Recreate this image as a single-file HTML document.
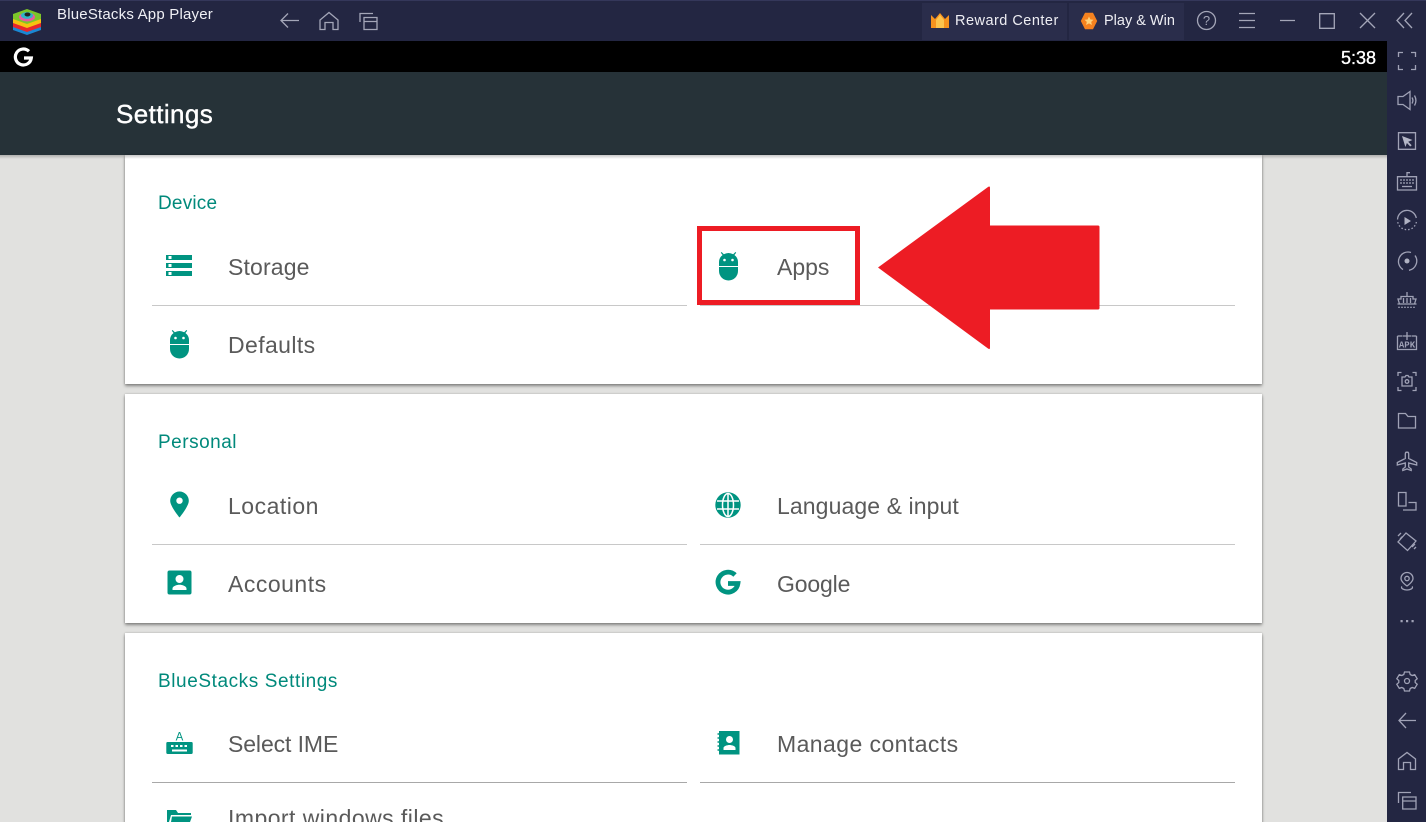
<!DOCTYPE html>
<html lang="en"><head><meta charset="utf-8"><title>BlueStacks App Player</title>
<style>
html,body{margin:0;padding:0;width:1426px;height:822px;overflow:hidden;background:#e1e1df;font-family:"Liberation Sans",sans-serif}
div,span,svg{position:absolute}
#app{left:0;top:0;width:1426px;height:822px;overflow:hidden;background:#e1e1df}
.t{white-space:nowrap;color:#5a5a5a;font-size:23px;line-height:28px}
.h{white-space:nowrap;color:#00897b;font-size:19px;line-height:22px}
.card{left:125px;width:1137px;background:#fff;box-shadow:0 2px 3px rgba(0,0,0,.4),0 0 2px rgba(0,0,0,.2)}
.l{height:1px;background:#c8c8c8;width:535px}
.w{white-space:nowrap;color:#fff}
.s{fill:none;stroke:#a0a2b6;stroke-width:1.3}
.tl{fill:none;stroke:#a4a6b8;stroke-width:1.3}
.b{background:#2a2d4b;height:37px;top:3px}
</style></head><body>
<div id="app">
<div style="left:0;top:0;width:1426px;height:41px;background:#232642"></div>
<div style="left:0;top:0;width:1426px;height:1px;background:#34375a"></div>
<div style="left:1387px;top:41px;width:39px;height:781px;background:#232642"></div>
<div style="left:0;top:41px;width:1387px;height:31px;background:#000"></div>
<div style="left:0;top:72px;width:1387px;height:83px;background:#263238"></div>

<!-- logo -->
<svg style="left:12px;top:8px" width="30" height="28" viewBox="0 0 30 28">
<path d="M1 17v5l14 5 14-5v-6z" fill="#1a88d4"/><path d="M1 14v5l14 5 14-5v-5z" fill="#e8262c"/>
<path d="M1 10v5l14 5 14-5v-5z" fill="#f5c211"/><path d="M1 6v5l14 5 14-5V6L15 1z" fill="#7cc52a"/>
<ellipse cx="15" cy="9" rx="8" ry="4.5" fill="#e85aa0"/><ellipse cx="15" cy="7.5" rx="6" ry="3.4" fill="#2fb5c8"/><ellipse cx="15.500" cy="6.500" rx="3" ry="2" fill="#222"/>
</svg>
<div class="w" style="left:57px;top:6px;font-size:15px;line-height:17px;letter-spacing:.2px;color:#f0f0f5">BlueStacks App Player</div>
<svg style="left:278px;top:10px" width="110" height="22" viewBox="0 0 110 22">
<path class="tl" d="M3 10.500h18M10 3.500l-7 7 7 7"/>
<path class="tl" d="M42 19.500v-9.500l9-7.500 9 7.500v9.500h-5v-7h-8v7z"/>
<path class="tl" d="M82 12V3.500h13M86 7.500h13v12H86zM86 11.500h13"/>
</svg>

<div class="b" style="left:922px;width:145px"></div>
<div class="b" style="left:1069px;width:115px"></div>
<svg style="left:930px;top:12px" width="20" height="18" viewBox="0 0 20 18"><path d="M1 3l4 4 5-6 5 6 4-4v13H1z" fill="#f7931e"/><path d="M6 16V8l4-5 4 5v8z" fill="#fcc44d"/></svg>
<div class="w" style="left:955px;top:12px;font-size:14.500px;line-height:18px;color:#eeeef3;letter-spacing:.48px">Reward Center</div>
<svg style="left:1080px;top:12px" width="18" height="18" viewBox="0 0 18 18"><path d="M5 .800h8L17.200 9 13 17.200H5L.8 9z" fill="#f5821f"/><path d="M9 4.500l1.400 3 3.100.3-2.300 2.100.7 3.100L9 11.400l-2.900 1.600.7-3.100-2.300-2.100 3.100-.3z" fill="#ffd27a"/></svg>
<div class="w" style="left:1104px;top:12px;font-size:14.500px;line-height:18px;color:#eeeef3">Play &amp; Win</div>
<svg style="left:1195px;top:9px" width="225" height="24" viewBox="0 0 225 24">
<circle class="tl" cx="11.500" cy="11.500" r="9"/>
<text x="11.500" y="16" font-size="13" text-anchor="middle" fill="#a4a6b8" font-family="Liberation Sans">?</text>
<path class="tl" d="M44 4.500h16M44 11.500h16M44 18.500h16M85 11.500h15"/>
<path class="tl" d="M124.700 4.700h14.600v14.600h-14.600zM165 4l15 15M180 4l-15 15"/>
<path class="tl" d="M209 4l-7 7.500 7 7.500M217 4l-7 7.500 7 7.500"/>
</svg>

<!-- status -->
<svg style="left:13px;top:47px" width="21" height="20" viewBox="0 0 21 20"><path d="M16 4.300A8 8 0 1 0 18.300 11H11" fill="none" stroke="#fff" stroke-width="3.200"/></svg>
<div class="w" style="left:1341px;top:48px;font-size:18px;line-height:21px;-webkit-text-stroke:.35px #fff">5:38</div>
<div class="w" style="left:116px;top:98px;font-size:26px;line-height:32px;letter-spacing:.4px;-webkit-text-stroke:.4px #fff">Settings</div>

<!-- cards -->
<div class="card" style="top:155px;height:229px"></div>
<div class="card" style="top:394px;height:229px"></div>
<div class="card" style="top:633px;height:195px"></div>
<div style="left:0;top:155px;width:1387px;height:4px;background:linear-gradient(rgba(0,0,0,.22),rgba(0,0,0,0))"></div>

<div class="h" style="left:158px;top:193px;letter-spacing:.2px">Device</div>
<div class="h" style="left:158px;top:432px;letter-spacing:.5px">Personal</div>
<div class="h" style="left:158px;top:671px;letter-spacing:.58px">BlueStacks Settings</div>

<div class="t" style="left:228px;top:253px;letter-spacing:.15px">Storage</div>
<div class="t" style="left:228px;top:331px;letter-spacing:.4px">Defaults</div>
<div class="t" style="left:777px;top:253px">Apps</div>
<div class="t" style="left:228px;top:492px;letter-spacing:.5px">Location</div>
<div class="t" style="left:228px;top:570px;letter-spacing:.5px">Accounts</div>
<div class="t" style="left:777px;top:492px;letter-spacing:.1px">Language &amp; input</div>
<div class="t" style="left:777px;top:570px;letter-spacing:-.15px">Google</div>
<div class="t" style="left:228px;top:730px;letter-spacing:-.1px">Select IME</div>
<div class="t" style="left:777px;top:730px;letter-spacing:.43px">Manage contacts</div>
<div class="t" style="left:228px;top:804px;letter-spacing:.45px">Import windows files</div>

<div class="l" style="left:152px;top:305px"></div><div class="l" style="left:700px;top:305px"></div>
<div class="l" style="left:152px;top:544px"></div><div class="l" style="left:700px;top:544px"></div>
<div class="l" style="left:152px;top:782px;background:#a8a8a8"></div><div class="l" style="left:700px;top:782px;background:#a8a8a8"></div>

<!-- teal icons -->
<svg style="left:166px;top:255px" width="27" height="22" viewBox="0 0 27 22"><path fill="#009481" fill-rule="evenodd" d="M0 0h26v5H0zM2.500 1v3h3V1zM0 8h26v5H0zM2.500 9v3h3V9zM0 16h26v5H0zM2.500 17v3h3v-3z"/></svg>
<svg style="left:170px;top:330px" width="19" height="29" viewBox="0 0 19 29"><path fill="#009481" d="M0 14v-4a9.500 9 0 0 1 3.600-7L1.800.8 2.600 0l2.200 2.300a9.500 9 0 0 1 9.400 0L16.400 0l.8.8L15.400 3A9.500 9 0 0 1 19 10v4z"/><path fill="#009481" d="M0 15h19v4a9.500 9.500 0 0 1-19 0z"/><circle cx="5.500" cy="8" r="1.300" fill="#fff"/><circle cx="13.500" cy="8" r="1.300" fill="#fff"/></svg>
<svg style="left:719px;top:252px" width="19" height="29" viewBox="0 0 19 29"><path fill="#009481" d="M0 14v-4a9.500 9 0 0 1 3.600-7L1.800.8 2.600 0l2.200 2.300a9.500 9 0 0 1 9.400 0L16.400 0l.8.8L15.400 3A9.500 9 0 0 1 19 10v4z"/><path fill="#009481" d="M0 15h19v4a9.500 9.500 0 0 1-19 0z"/><circle cx="5.500" cy="8" r="1.300" fill="#fff"/><circle cx="13.500" cy="8" r="1.300" fill="#fff"/></svg>
<svg style="left:170px;top:491px" width="19" height="27" viewBox="0 0 19 27"><path fill="#009481" fill-rule="evenodd" d="M9.500 .5A9.300 9.300 0 0 1 18.800 9.800C18.800 15.500 9.500 26.500 9.500 26.500S.2 15.500 .2 9.800A9.300 9.300 0 0 1 9.500 .5zM9.500 6.500a3.200 3.200 0 1 0 0 6.400 3.200 3.200 0 0 0 0-6.400z"/></svg>
<svg style="left:167px;top:570px" width="25" height="25" viewBox="0 0 25 25"><path fill="#009481" fill-rule="evenodd" d="M2.500.5h20a2 2 0 0 1 2 2v20a2 2 0 0 1-2 2h-20a2 2 0 0 1-2-2v-20a2 2 0 0 1 2-2zM12.500 5a4 4 0 1 0 0 8 4 4 0 0 0 0-8zM5.500 20h14v-1.500c0-2.500-4.500-3.800-7-3.800s-7 1.300-7 3.800z"/></svg>
<svg style="left:715px;top:492px" width="27" height="27" viewBox="0 0 27 27"><circle cx="13" cy="13" r="12.700" fill="#009481"/><g fill="none" stroke="#fff" stroke-width="1.500"><ellipse cx="13" cy="13" rx="5.500" ry="11.500"/><path d="M13 1.500v23M2 9h22M2 17h22"/></g></svg>
<svg style="left:715px;top:569px" width="27" height="27" viewBox="0 0 27 27"><path d="M20 6A10 10 0 1 0 22.900 14.500H13" fill="none" stroke="#009481" stroke-width="4.800"/></svg>
<svg style="left:166px;top:731px" width="28" height="25" viewBox="0 0 28 25"><path fill="#009481" fill-rule="evenodd" d="M1.500 11h24a1.200 1.200 0 0 1 1.200 1.200v9.600a1.200 1.200 0 0 1-1.200 1.200h-24a1.200 1.200 0 0 1-1.200-1.200v-9.600A1.200 1.200 0 0 1 1.500 11zM5 14v2h2.500v-2zM9.500 14v2H12v-2zM14 14v2h2.500v-2zM18.500 14v2H21v-2zM6 18.500v2h15v-2z"/><text x="13.500" y="9.500" font-size="11.500" text-anchor="middle" fill="#009481" font-family="Liberation Sans">A</text></svg>
<svg style="left:717px;top:731px" width="23" height="25" viewBox="0 0 23 25"><path fill="#009481" fill-rule="evenodd" d="M2 0h20.500v23.500H2zM12.500 5a3.500 3.500 0 1 0 0 7 3.500 3.500 0 0 0 0-7zM6.500 19h12v-2c0-2-4-3-6-3s-6 1-6 3z"/><path d="M.5 3h3M.5 7h3M.5 11h3M.5 15h3M.5 19h3" stroke="#009481" stroke-width="1.500"/></svg>
<svg style="left:166px;top:810px" width="27" height="12" viewBox="0 0 27 12"><path fill="#009481" d="M1 0h9l2 3h13v2H5L3 12H1z"/><path fill="#009481" d="M6 6.500h20L24 12H5z"/></svg>

<!-- annotation -->
<div style="left:697px;top:226px;width:153px;height:69px;border:5px solid #ed1c24"></div>
<svg style="left:876px;top:184px" width="226" height="168" viewBox="0 0 226 168"><path d="M2 83.500L112 3q2-1.500 2 1v37.500h108q1.500 0 1.500 1.500v81q0 1.500-1.500 1.500H114v38q0 2.500-2 1z" fill="#ed1c24"/></svg>

<!-- sidebar -->
<svg style="left:1387px;top:41px" width="39" height="781" viewBox="0 41 39 781">
<path class="s" d="M11.500 57v-4.500H16M24 52.500h4.500V57M11.500 65v4.500H16M24 69.500h4.500V65"/>
<path class="s" d="M11 96.500h5l7-5v18l-7-5h-5zM25 97.500c1.200 2 1.200 4 0 6M27.500 95.500c2 3.500 2 6.500 0 10"/>
<path class="s" d="M11.500 132.700h17v16.600h-17z"/><path d="M15 136l10.500 4-4.300 1.700 3.500 3.500-1.500 1.300-3.300-3.500-1.500 4z" fill="#b4b6c6"/>
<path class="s" d="M10.500 176.700h19V190h-19zM20 176.700v-4h3"/><path d="M13 180h14M13 183h14" stroke="#a0a2b6" stroke-width="1.300" stroke-dasharray="2 1" fill="none"/><path class="s" d="M15 186.500h10"/>
<path class="s" d="M10.500 219.500a9.500 9.500 0 0 1 18.800-1.500"/><path class="s" stroke-dasharray="1.500 2" d="M29.400 222a9.500 9.500 0 0 1-18.800-1"/><path d="M17.500 217l6.500 4-6.500 4z" fill="#b0b2c2"/>
<path class="s" d="M24 252.500A9.500 9.500 0 0 0 16 269.600M28 255.500A9.500 9.500 0 0 1 22 270.300"/><circle cx="20" cy="261" r="2.500" fill="#b0b2c2"/>
<path class="s" d="M10.500 304h19M12.500 304l-1.500-5h3v-2.500h12v2.500h3l-1.500 5M20 292v4.500M16.500 298v5M20 298v5M23.500 298v5"/><path d="M11 307.300h18" stroke="#a0a2b6" stroke-dasharray="2 1" fill="none"/>
<path class="s" d="M10.500 336h5M24.500 336h5M10.500 336v13.500h19V336M20 332v8M16 336h8"/><text x="20" y="347.500" font-size="9" font-weight="bold" text-anchor="middle" fill="#a0a2b6" font-family="Liberation Mono">APK</text>
<path class="s" d="M11 376v-3.500h3.500M25.500 372.500H29V376M11 387v3.500h3.500M25.500 390.500H29V387M15 377h3l1-1.500h2l1 1.500h3v9H15z"/><circle cx="20" cy="381.500" r="1.800" class="s"/>
<path class="s" d="M11.500 413.500h7l2.500 3h7.500v11.500h-17z"/>
<path class="s" d="M20 452.500c1-1 1.700 0 1.700 1.500v4.500l8 4v2.500l-8-2v4l2.500 2v1.500L20 469l-4.200 1.500V469l2.500-2v-4l-8 2v-2.500l8-4V454c0-1.500.700-2.500 1.700-1.500z"/>
<path class="s" d="M11.500 492.500h7.500v13.500h-7.500zM21.500 502.500h7.500v7.500H16"/>
<path class="s" d="M19 533l10 8-8.500 9.500-9.500-8.500z"/><path class="s" d="M11 536l3-3M13 539l2.500-2.500M25 547l3-3M27 549l2-2"/>
<path class="s" d="M20 572.500a6 6 0 0 1 6 6c0 3.500-6 7.500-6 7.500s-6-4-6-7.500a6 6 0 0 1 6-6z"/><circle class="s" cx="20" cy="578.500" r="2.200"/><path class="s" d="M15 586.500c-2 2 2.500 3.500 5 3.500s7-1.500 5-3.500"/>
<path d="M13.500 620h2.200v2.200h-2.200zM19 620h2.200v2.200H19zM24.500 620h2.200v2.200h-2.200z" fill="#a0a2b6"/>
<path class="s" d="M17.500 672h5l.7 2.500 2 1 2.500-.8 2.500 4-2 1.800v2l2 1.800-2.500 4-2.500-.8-2 1-.7 2.500h-5l-.7-2.500-2-1-2.500.8-2.500-4 2-1.800v-2l-2-1.800 2.500-4 2.500.8 2-1z"/><circle class="s" cx="20" cy="681" r="2.500"/>
<path class="s" d="M12 720.500h17M19 713l-7 7.500 7 7.500"/>
<path class="s" d="M11.500 769.500V759l8.500-6.500 8.500 6.500v10.500h-5v-7h-7v7z"/>
<path class="s" d="M11.500 803v-10.500H24M15.700 797H29v12H15.700zM15.700 801H29"/>
</svg>
</div>
</body></html>
